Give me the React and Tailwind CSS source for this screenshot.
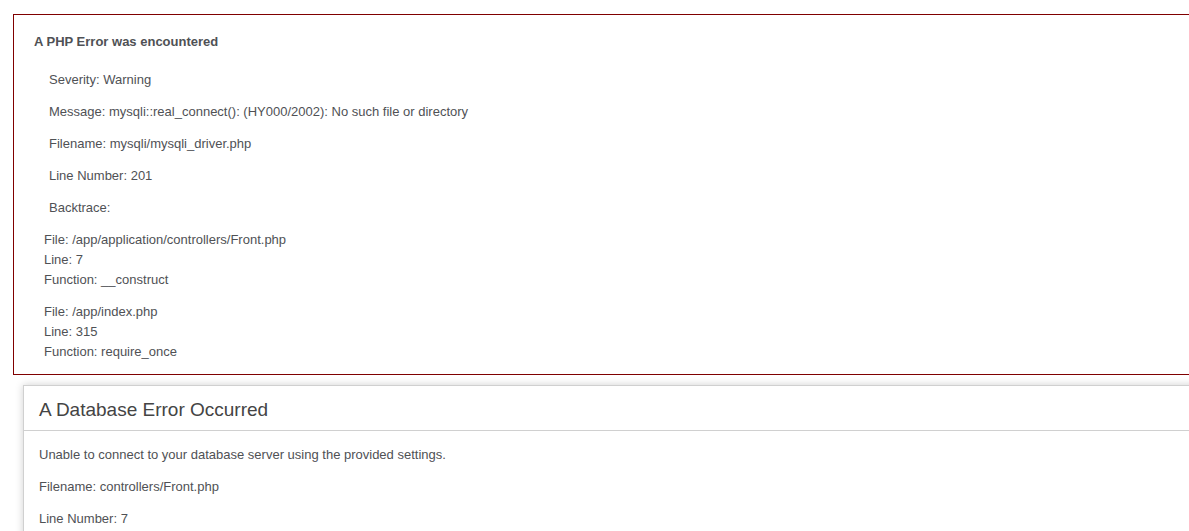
const trace = [
  { file: '/app/application/controllers/Front.php', line: '7', fn: '__construct' },
  { file: '/app/index.php', line: '315', fn: 'require_once' },
]

export default function App() {
  return (
    <div className="w-[1189px] h-[531px] overflow-hidden bg-white text-[13px] leading-[20px] text-[#4F5155] font-['Liberation_Sans',Arial,sans-serif]">
      <div className="w-[1300px] pt-[14px] pl-[13px]">

        {/* PHP error */}
        <div className="border border-[#800000] pl-[20px] mb-[10px]">
          <h4 className="font-bold text-[13px] mt-[17px] mb-[18px]">A PHP Error was encountered</h4>
          <p className="my-[12px] mx-[15px]">Severity: Warning</p>
          <p className="my-[12px] mx-[15px]">Message: mysqli::real_connect(): (HY000/2002): No such file or directory</p>
          <p className="my-[12px] mx-[15px]">Filename: mysqli/mysqli_driver.php</p>
          <p className="my-[12px] mx-[15px]">Line Number: 201</p>
          <p className="my-[12px] mx-[15px]">Backtrace:</p>
          {trace.map((t) => (
            <p key={t.file} className="my-[12px] ml-[10px] mr-[15px]">
              File: {t.file}<br />
              Line: {t.line}<br />
              Function: {t.fn}
            </p>
          ))}
        </div>

        {/* Database error */}
        <div className="m-[10px] mt-0 border border-[#D0D0D0] shadow-[0_0_8px_#D0D0D0]">
          <h1 className="text-[19px] leading-[20px] font-normal text-[#444] border-b border-[#D0D0D0] pt-[14px] px-[15px] pb-[10px] mb-[14px]">
            A Database Error Occurred
          </h1>
          <p className="my-[12px] mx-[15px]">Unable to connect to your database server using the provided settings.</p>
          <p className="my-[12px] mx-[15px]">Filename: controllers/Front.php</p>
          <p className="my-[12px] mx-[15px]">Line Number: 7</p>
        </div>
      </div>
    </div>
  )
}
